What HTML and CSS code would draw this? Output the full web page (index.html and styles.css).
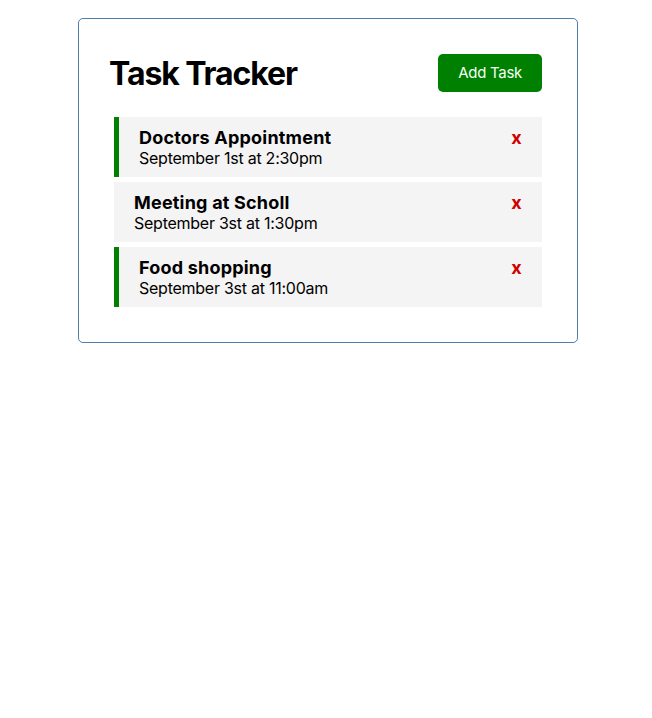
FILE: index.html
```html
<!DOCTYPE html>
<html lang="en">
<head>
    <meta charset="UTF-8">
    <meta name="viewport" content="width=device-width, initial-scale=1.0">
    <title>Task Tracker</title>
    <link rel="stylesheet" href="styles.css">
</head>
<body>
    <div class="container">
        <header class="header">
            <h1>Task Tracker</h1>
            <button class="btn">Add Task</button>
        </header>

        <div class="task reminder">
            <h3>Doctors Appointment <span class="delete">x</span></h3>
            <p>September 1st at 2:30pm</p>
        </div>
        <div class="task">
            <h3>Meeting at Scholl <span class="delete">x</span></h3>
            <p>September 3st at 1:30pm</p>
        </div>
        <div class="task reminder">
            <h3>Food shopping <span class="delete">x</span></h3>
            <p>September 3st at 11:00am</p>
        </div>
    </div>
</body>
</html>
```

FILE: styles.css
```css
* {
    box-sizing: border-box;
    margin: 0;
    padding: 0;
}

body {
    font-family: Inter, "Noto Sans", sans-serif;
    background-color: #fff;
    color: #000;
    padding-left: 4px;
}

.container {
    max-width: 500px;
    margin: 18px auto;
    min-height: 300px;
    border: 1px solid #4f7eaa;
    padding: 30px;
    border-radius: 5px;
}

.header {
    display: flex;
    justify-content: space-between;
    align-items: center;
    margin-bottom: 20px;
}

.header h1 {
    font-size: 32px;
    font-weight: 700;
    letter-spacing: -1.1px;
}

.btn {
    display: inline-block;
    background: #008000;
    color: #f4fff4;
    border: none;
    padding: 10px 20px;
    margin: 5px;
    border-radius: 5px;
    cursor: pointer;
    font-size: 15px;
    line-height: 18px;
    letter-spacing: -0.3px;
    font-family: inherit;
}

.task {
    background: #f4f4f4;
    margin: 5px;
    padding: 10px 20px;
    cursor: pointer;
}

.task.reminder {
    border-left: 5px solid #008000;
}

.task h3 {
    display: flex;
    align-items: center;
    justify-content: space-between;
    font-size: 18px;
    line-height: 22px;
    font-weight: 700;
    letter-spacing: 0.2px;
}

.task p {
    font-size: 16px;
    line-height: 18px;
    letter-spacing: -0.25px;
}

.delete {
    color: #d00000;
    font-weight: 700;
    font-size: 18px;
}
```
